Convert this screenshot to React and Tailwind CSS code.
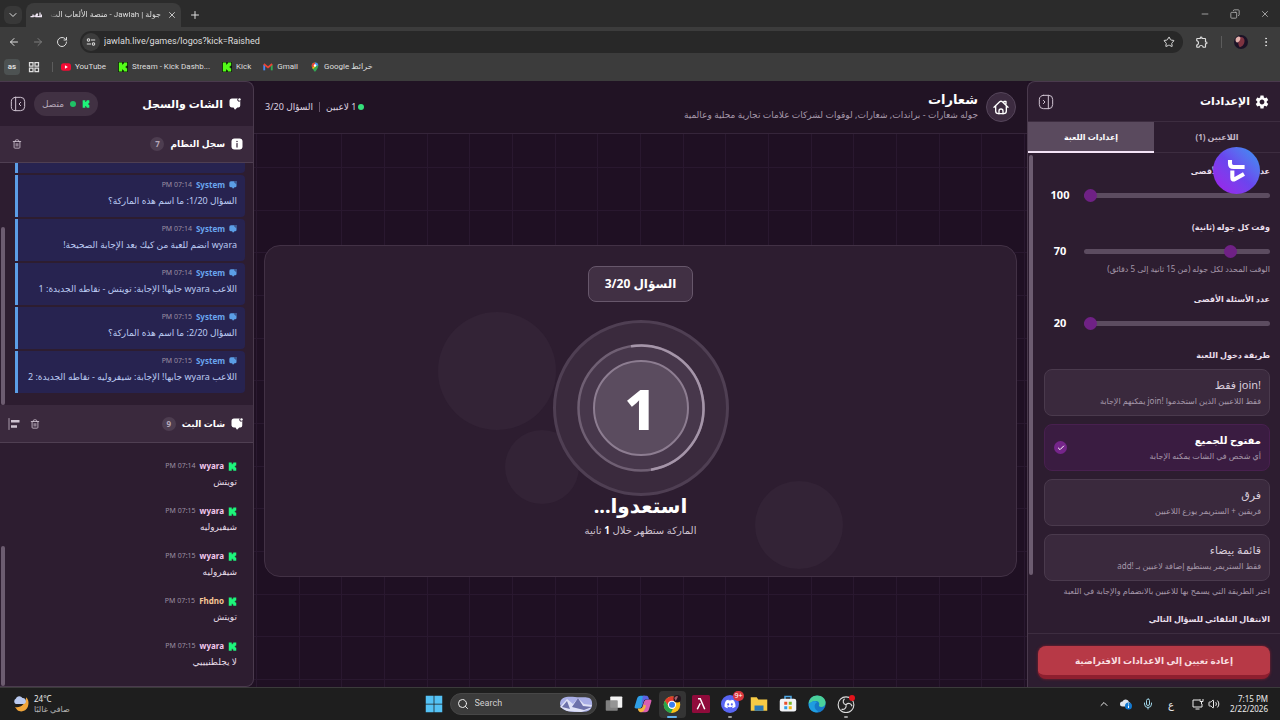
import React, { useState } from 'react';
import {
  ArrowLeft, ArrowRight, Check, ChevronDown, ChevronUp, Copy, EllipsisVertical,
  Mic, Minus, Plus, RotateCw, Search, Star, Trash2, Volume2, X,
} from 'lucide-react';
import { FaDiscord } from 'react-icons/fa';
import { MdOutlineExtension, MdSettings } from 'react-icons/md';

const systemMessages = [
  { time: '07:14 PM', text: 'السؤال 1/20: ما اسم هذه الماركة؟' },
  { time: '07:14 PM', text: 'wyara انضم للعبة من كيك بعد الإجابة الصحيحة!' },
  { time: '07:14 PM', text: 'اللاعب wyara جابها! الإجابة: تويتش - نقاطه الجديدة: 1' },
  { time: '07:15 PM', text: 'السؤال 2/20: ما اسم هذه الماركة؟' },
  { time: '07:15 PM', text: 'اللاعب wyara جابها! الإجابة: شيفروليه - نقاطه الجديدة: 2' },
];

const chatMessages = [
  { user: 'wyara', color: 'text-[#f3c9ee]', time: '07:14 PM', text: 'تويتش' },
  { user: 'wyara', color: 'text-[#f3c9ee]', time: '07:15 PM', text: 'شيفيروليه' },
  { user: 'wyara', color: 'text-[#f3c9ee]', time: '07:15 PM', text: 'شيفروليه' },
  { user: 'Fhdno', color: 'text-[#f5c795]', time: '07:15 PM', text: 'تويتش' },
  { user: 'wyara', color: 'text-[#f3c9ee]', time: '07:15 PM', text: 'لا يجلطنيييي' },
];

const joinModes = [
  { id: 'join', title: '!join فقط', hint: 'فقط اللاعبين الذين استخدموا !join يمكنهم الإجابة' },
  { id: 'open', title: 'مفتوح للجميع', hint: 'أي شخص في الشات يمكنه الإجابة' },
  { id: 'teams', title: 'فرق', hint: 'فريقين + الستريمر يوزع اللاعبين' },
  { id: 'whitelist', title: 'قائمة بيضاء', hint: 'فقط الستريمر يستطيع إضافة لاعبين بـ !add' },
];

/* ---------- icons ---------- */

const KickIcon = ({ className, boxed }) => (
  <svg viewBox="0 0 24 24" className={className} aria-hidden="true">
    {boxed && <rect width="24" height="24" fill="#0c1a0a" />}
    <path
      d="M2 1h8v5h2V4h2V1h8v8h-2v2h-2v2h2v2h2v8h-8v-3h-2v-2h-2v5H2z"
      fill={boxed ? '#53fc18' : '#1df57a'}
    />
  </svg>
);

const ChatIcon = ({ className }) => (
  <svg viewBox="0 0 24 24" className={className} fill="currentColor" aria-hidden="true">
    <path d="M6 1h11.500a3.500 3.500 0 0 0 5 5V15a4 4 0 0 1-4 4h-2L12 23.500 9 19H6a5 5 0 0 1-5-4V6a5 5 0 0 1 5-5z" />
    <circle cx="21" cy="3" r="2.400" />
  </svg>
);

const InfoIcon = ({ className }) => (
  <svg viewBox="0 0 24 24" className={className} aria-hidden="true">
    <rect x="1" y="1" width="22" height="22" rx="6" fill="currentColor" />
    <circle cx="12" cy="7" r="1.500" fill="#3a293d" />
    <path d="M12 11v7" stroke="#3a293d" strokeWidth="2.500" strokeLinecap="round" />
  </svg>
);

const PanelIcon = ({ className, flip }) => (
  <svg viewBox="0 0 24 24" className={className} fill="none" stroke="currentColor" strokeWidth="1.500" strokeLinecap="round" strokeLinejoin="round" aria-hidden="true">
    <rect x="2" y="2" width="20" height="20" rx="6" />
    <path d={flip ? 'M15.500 2v20M8 9.500l2.500 2.500L8 14.500' : 'M8.500 2v20M16 9.500 13.500 12l2.500 2.500'} />
  </svg>
);

const HomeIcon = ({ className }) => (
  <svg viewBox="0 0 24 24" className={className} fill="none" stroke="currentColor" strokeWidth="2" strokeLinecap="round" strokeLinejoin="round" aria-hidden="true">
    <path d="M1.500 12.500 10 4.200a3 3 0 0 1 4 0l8.500 8.300M4 10.500V18a4 4 0 0 0 4 4h8a4 4 0 0 0 4-4v-7.500M16.500 5V3.500h3V8" />
    <path d="M9 22v-4a3 3 0 0 1 6 0v4" />
  </svg>
);

const AlignIcon = ({ className }) => (
  <svg viewBox="0 0 24 24" className={className} fill="none" stroke="currentColor" aria-hidden="true">
    <path d="M2 1v22" strokeWidth="1.500" strokeLinecap="round" />
    <path d="M6 6.500h17M6 17h12" strokeWidth="5" />
  </svg>
);

const TuneIcon = ({ className }) => (
  <svg viewBox="0 0 24 24" className={className} fill="none" stroke="currentColor" strokeWidth="2.500" aria-hidden="true">
    <circle cx="6" cy="7" r="3" />
    <path d="M12 7h10M2 17h10" />
    <circle cx="18" cy="17" r="3" />
  </svg>
);

const AppsIcon = ({ className }) => (
  <svg viewBox="0 0 24 24" className={className} fill="none" stroke="currentColor" strokeWidth="2.500" aria-hidden="true">
    <path d="M3 3h7v7H3zM14 3h7v7h-7zM3 14h7v7H3zM14 14h7v7h-7z" />
  </svg>
);

const YouTubeIcon = ({ className }) => (
  <svg viewBox="0 0 24 24" className={className} aria-hidden="true">
    <rect x="0" y="3" width="24" height="18" rx="6" fill="#f40a33" />
    <path d="M9.500 8v8l7-4z" fill="#fff" />
  </svg>
);

const GmailIcon = ({ className }) => (
  <svg viewBox="0 0 24 24" className={className} fill="none" strokeWidth="4.500" aria-hidden="true">
    <path d="M3 20V7" stroke="#4a8af4" />
    <path d="M21 20V7" stroke="#34a853" />
    <path d="m2 5 10 8 10-8" stroke="#ea4335" />
  </svg>
);

const MapsIcon = ({ className }) => (
  <svg viewBox="0 0 24 24" className={className} aria-hidden="true">
    <path d="M12 24S4 15 4 8.500A8 8 0 0 1 12 1a8 8 0 0 1 8 7.500C20 15 12 24 12 24z" fill="#34a853" />
    <path d="M4 8.500A8 8 0 0 1 12 1v8l-6.500 5A12 12 0 0 1 4 8.500z" fill="#ea4335" />
    <path d="M12 1a8 8 0 0 1 8 7.500L12 9z" fill="#4a8af4" />
    <path d="M5.500 14 12 8l2 2-7 7.500z" fill="#fbbc04" />
    <circle cx="12" cy="8.500" r="3" fill="#fff" />
  </svg>
);

const Avatar = ({ className }) => (
  <svg viewBox="0 0 24 24" className={className} aria-hidden="true">
    <circle cx="12" cy="12" r="12" fill="#1b1226" />
    <path d="M9 4c5-2 9 1 9 6 0 5-3 10-8 11-3-3-4-10-1-17z" fill="#7d3340" />
    <path d="M3 6c4-5 7-4 8-1 0 4-2 6-5 8-3 0-4-4-3-7z" fill="#e5b3ae" />
  </svg>
);

/* ---------- browser chrome ---------- */

const BrowserBar = () => (
  <header className="shrink-0 bg-[#3c3c3c] font-['Roboto','DejaVu_Sans',sans-serif] text-[#dedede]">
    <div className="flex h-[27px] items-end justify-between bg-[#2b2b2b] pl-1">
      <div className="flex h-6 items-center">
        <button aria-label="Search tabs" className="grid h-[18px] w-[18px] place-items-center rounded-md bg-[#383838]">
          <ChevronDown className="h-3 w-3" />
        </button>
        <div className="ml-1 flex h-6 w-[155px] items-center gap-1.5 rounded-t-lg bg-[#3c3c3c] px-1">
          <svg viewBox="0 0 24 12" className="h-2 w-3 shrink-0" fill="none" stroke="#f0e6f4" strokeWidth="2.500" aria-hidden="true">
            <path d="M1 9h5V5M6 8h6q3 0 3-3t-3 1v3h8V1M20 9h3V5" />
          </svg>
          <div dir="rtl" className="min-w-0 flex-1 overflow-hidden text-[8px] whitespace-nowrap [mask-image:linear-gradient(to_right,transparent,black_12px)]">
            جولة | Jawlah - منصة الألعاب الت
          </div>
          <button aria-label="Close tab"><X className="h-2.5 w-2.5" /></button>
        </div>
        <button aria-label="New tab" className="ml-2"><Plus className="h-3 w-3" /></button>
      </div>
      <div className="flex h-[27px] items-center gap-5 pr-2.5 text-[#b5b5b5]">
        <button aria-label="Minimize"><Minus className="h-2.5 w-2.5" /></button>
        <button aria-label="Restore"><Copy className="h-2.5 w-2.5 -scale-x-100" /></button>
        <button aria-label="Close"><X className="h-2.5 w-2.5" /></button>
      </div>
    </div>

    <div className="flex h-[30px] items-center gap-3 pl-2 pr-2">
      <button aria-label="Back"><ArrowLeft className="h-3 w-3" /></button>
      <button aria-label="Forward" className="text-[#7d7d7d]"><ArrowRight className="h-3 w-3" /></button>
      <button aria-label="Reload"><RotateCw className="h-3 w-3" /></button>
      <div className="flex h-[22px] flex-1 items-center gap-1 rounded-full bg-[#282828] pl-0.5 pr-2">
        <span className="grid h-[18px] w-[18px] place-items-center rounded-full bg-[#3c3c3c]"><TuneIcon className="h-2.5 w-2.5" /></span>
        <input aria-label="Address" defaultValue="jawlah.live/games/logos?kick=Raished" className="min-w-0 flex-1 bg-transparent text-[9px] outline-none" />
        <button aria-label="Bookmark"><Star className="h-3 w-3" /></button>
      </div>
      <button aria-label="Extensions"><MdOutlineExtension className="h-3.5 w-3.5" /></button>
      <span className="h-3 w-px bg-[#5c5c5c]" />
      <button aria-label="Profile"><Avatar className="h-3.5 w-3.5" /></button>
      <button aria-label="Menu"><EllipsisVertical className="h-3 w-3" /></button>
    </div>

    <nav className="flex h-6 items-center gap-3 px-1 pb-1 text-[8px]">
      <a href="#as" className="grid h-4 w-4 place-items-center rounded bg-[#4d5252] font-bold">as</a>
      <a href="#apps" aria-label="Apps" className="-ml-1"><AppsIcon className="h-3 w-3" /></a>
      <span className="h-2.5 w-px bg-[#5c5c5c]" />
      <a href="#youtube" className="-ml-1 flex items-center gap-1"><YouTubeIcon className="h-2.5 w-2.5" />YouTube</a>
      <a href="#dash" className="flex items-center gap-1"><KickIcon boxed className="h-2.5 w-2.5" />Stream - Kick Dashb...</a>
      <a href="#kick" className="flex items-center gap-1"><KickIcon boxed className="h-2.5 w-2.5" />Kick</a>
      <a href="#gmail" className="flex items-center gap-1"><GmailIcon className="h-2.5 w-2.5" />Gmail</a>
      <a href="#maps" className="flex items-center gap-1"><MapsIcon className="h-2.5 w-2.5" /><span dir="rtl">خرائط Google</span></a>
    </nav>
  </header>
);

/* ---------- chat panel ---------- */

const Count = ({ children }) => (
  <span className="grid h-[14px] w-[14px] place-items-center rounded-full bg-[#4d3d50] text-[8px] text-[#b5a8b8]">{children}</span>
);

const Message = ({ icon, name, nameClass, time, text, textClass }) => (
  <>
    <div className="flex items-center gap-1 text-[8px] leading-3">
      {icon}
      <span className={nameClass}>{name}</span>
      <span className="text-[7px] text-[#9c8fa2]">{time}</span>
    </div>
    <p className={textClass}>{text}</p>
  </>
);

const ChatPanel = () => (
  <aside className="flex w-[254px] shrink-0 flex-col overflow-hidden rounded-br-lg rounded-tr-lg border-b border-r border-t border-[#4a3a4d] bg-[#2d1d30]">
    <div className="flex h-[44px] shrink-0 items-center justify-between pl-2.5 pr-3">
      <h2 className="flex items-center gap-1.5 text-[11px] font-bold text-white">
        <ChatIcon className="h-3 w-3" />
        الشات والسجل
      </h2>
      <div className="flex items-center gap-2">
        <span className="flex h-6 items-center gap-1.5 rounded-full bg-[#413143] px-2 text-[9px] text-[#b5a8b8]">
          <KickIcon className="h-2 w-2" />
          <span className="h-1.5 w-1.5 rounded-full bg-[#1fc266]" />
          متصل
        </span>
        <button aria-label="إخفاء الشات" className="text-[#cfc3d1]"><PanelIcon className="h-4 w-4" /></button>
      </div>
    </div>

    <div className="flex h-[37px] shrink-0 items-center justify-between border-b border-[#4f3f52] bg-[#3a293d] pl-3 pr-2.5">
      <h3 className="flex items-center gap-1.5 text-[9px] font-bold text-white">
        <InfoIcon className="h-3 w-3" />
        سجل النظام
        <Count>7</Count>
      </h3>
      <button aria-label="مسح السجل" className="text-[#cfc3d1]"><Trash2 className="h-2.5 w-2.5" /></button>
    </div>
    <div className="flex h-[242px] shrink-0">
      <ul className="flex min-w-0 flex-1 flex-col justify-end gap-0.5 overflow-hidden pb-3 pr-2">
        <li aria-hidden="true" className="flex-1 rounded-br border-l-[3px] border-[#5b9ee6] bg-[#272350]" />
        {systemMessages.map((m, i) => (
          <li key={i} className="h-[42px] shrink-0 rounded-r border-l-[3px] border-[#5b9ee6] bg-[#272350] pr-2 pt-1">
            <Message
              icon={<ChatIcon className="h-2 w-2 text-[#5b9ee6]" />}
              name="System"
              nameClass="font-bold text-[#6aa5ee]"
              time={m.time}
              text={m.text}
              textClass="text-[9px] leading-5 whitespace-nowrap text-[#bccbf3]"
            />
          </li>
        ))}
      </ul>
      <div className="flex w-[15px] flex-col justify-end">
        <span className="mr-auto ml-px h-[178px] w-1 rounded-full bg-[#6c5c70]" />
      </div>
    </div>

    <div className="flex h-[38px] shrink-0 items-center justify-between border-b border-[#4f3f52] bg-[#3a293d] pl-2 pr-2.5">
      <h3 className="flex items-center gap-1.5 text-[9px] font-bold text-white">
        <ChatIcon className="h-3 w-3" />
        شات البث
        <Count>9</Count>
      </h3>
      <div className="flex items-center gap-2.5 text-[#cfc3d1]">
        <button aria-label="مسح الشات"><Trash2 className="h-2.5 w-2.5" /></button>
        <button aria-label="محاذاة"><AlignIcon className="h-3 w-3" /></button>
      </div>
    </div>
    <div className="flex min-h-0 flex-1">
      <ul className="flex min-w-0 flex-1 flex-col justify-end gap-[3px] overflow-hidden pb-2 pr-4">
        {chatMessages.map((m, i) => (
          <li key={i} className="h-[42px] shrink-0 pt-1">
            <Message
              icon={<KickIcon className="h-[9px] w-[9px]" />}
              name={m.user}
              nameClass={`font-bold ${m.color}`}
              time={m.time}
              text={m.text}
              textClass="text-[9px] leading-5 whitespace-nowrap text-[#e6dce8]"
            />
          </li>
        ))}
      </ul>
      <div className="flex w-[15px] flex-col justify-end">
        <span className="mr-auto ml-px h-[140px] w-1 rounded-full bg-[#6c5c70]" />
      </div>
    </div>
  </aside>
);

/* ---------- game area ---------- */

const GridBackdrop = () => (
  <svg className="absolute inset-0 h-full w-full" aria-hidden="true">
    <defs>
      <pattern id="grid" width="128" height="128" patternUnits="userSpaceOnUse" x="2" y="33">
        <path d="M.5 0v128M43.500 0v128M85.500 0v128M0 .5h128M0 43.500h128M0 85.500h128" stroke="#29182f" fill="none" />
      </pattern>
    </defs>
    <rect width="100%" height="100%" fill="url(#grid)" />
  </svg>
);

const Countdown = ({ value }) => (
  <div className="grid h-[176px] w-[176px] place-items-center">
    <svg viewBox="0 0 176 176" className="col-start-1 row-start-1 h-full w-full" fill="none" aria-hidden="true">
      <circle cx="88" cy="88" r="86.500" fill="#3a2a3d" stroke="#4f3f53" strokeWidth="3" />
      <circle cx="88" cy="88" r="62.500" fill="#47374b" stroke="#6f5f73" strokeWidth="2.500" />
      <path d="M78 26.300A62.500 62.500 0 0 1 98 149.700" stroke="#a595a9" strokeWidth="2.500" />
      <circle cx="88" cy="88" r="47" fill="#5b4c5f" stroke="#8d7d91" strokeWidth="2" />
    </svg>
    <span className="col-start-1 row-start-1 text-[56px] leading-none font-extrabold text-white">{value}</span>
  </div>
);

const GameArea = () => (
  <main className="flex min-w-0 flex-1 flex-col bg-[#1f1023]">
    <div className="flex h-[53px] shrink-0 items-center justify-between border-b border-[#35253a] bg-[#211324] px-[11px]">
      <div className="flex items-center gap-2">
        <a href="#home" aria-label="الرئيسية" className="grid h-[30px] w-[30px] place-items-center rounded-full border border-[#55455a] bg-[#3c2b40] text-white">
          <HomeIcon className="h-4 w-4" />
        </a>
        <div>
          <h1 className="text-[13px] leading-4 font-bold text-white">شعارات</h1>
          <p className="text-[9px] leading-4 text-[#a698aa]">جوله شعارات - براندات, شعارات, لوقوات لشركات علامات تجارية محلية وعالمية</p>
        </div>
      </div>
      <div className="flex items-center gap-1.5 text-[9px] text-[#ded3e0]">
        <span className="flex items-center gap-0.5">
          <span className="h-1.5 w-1.5 rounded-full bg-[#35e07c]" />
          1 لاعبين
        </span>
        <span className="h-2.5 w-px bg-[#66566a]" />
        <span>السؤال 3/20</span>
      </div>
    </div>

    <div className="relative flex min-h-0 flex-1 flex-col justify-center px-2.5">
      <GridBackdrop />
      <section className="relative flex flex-col items-center overflow-hidden rounded-2xl border border-[#423145] bg-[#2d1d30] pb-9 pt-5">
        <span className="absolute left-[23%] top-[20%] h-[118px] w-[118px] rounded-full bg-[#332336]" />
        <span className="absolute left-[32%] top-[56%] h-[74px] w-[74px] rounded-full bg-[#332336]" />
        <span className="absolute bottom-[2%] right-[23%] h-[88px] w-[88px] rounded-full bg-[#332336]" />
        <div className="relative flex flex-col items-center">
          <p className="mb-[18px] flex h-9 items-center rounded-lg border border-[#67576b] bg-[#413044] px-4 text-[12px] font-bold text-white">السؤال 3/20</p>
          <Countdown value={1} />
          <h2 className="text-[20px] leading-5 font-bold text-white">استعدوا...</h2>
          <p className="mt-1 text-[10px] leading-5 text-[#cfc3d1]">الماركة ستظهر خلال <b className="text-white">1</b> ثانية</p>
        </div>
      </section>
    </div>
  </main>
);

/* ---------- settings panel ---------- */

const RangeField = ({ id, label, min, max, value, onChange, help }) => (
  <div>
    <label htmlFor={id} className="block text-[8px] leading-4 font-bold text-[#e9dfeb]">{label}</label>
    <div className="mt-1.5 flex h-5 items-center">
      <input
        id={id}
        type="range"
        min={min}
        max={max}
        value={value}
        onChange={(e) => onChange(Number(e.target.value))}
        className="h-[5px] min-w-0 flex-1 appearance-none rounded-full bg-[#5c4c60] [&::-webkit-slider-thumb]:h-[13px] [&::-webkit-slider-thumb]:w-[13px] [&::-webkit-slider-thumb]:appearance-none [&::-webkit-slider-thumb]:rounded-full [&::-webkit-slider-thumb]:bg-[#6f2185]"
      />
      <output htmlFor={id} className="mr-2 w-8 text-center text-[11px] font-bold text-white">{value}</output>
    </div>
    {help && <p className="text-[8px] leading-4 text-[#a698aa]">{help}</p>}
  </div>
);

const SettingsPanel = () => {
  const [players, setPlayers] = useState(100);
  const [roundTime, setRoundTime] = useState(70);
  const [questions, setQuestions] = useState(20);
  const [mode, setMode] = useState('open');

  return (
    <aside className="relative flex w-[253px] shrink-0 flex-col rounded-tl-lg border-l border-t border-[#4a3a4d] bg-[#2d1d30]">
      <div className="flex h-[39px] shrink-0 items-center justify-between pl-2.5 pr-2.5">
        <h2 className="flex items-center gap-1 text-[11px] font-bold text-white">
          <MdSettings className="h-4 w-4" />
          الإعدادات
        </h2>
        <button aria-label="إخفاء الإعدادات" className="text-[#cfc3d1]"><PanelIcon flip className="h-4 w-4" /></button>
      </div>

      <div role="tablist" className="flex h-8 shrink-0 border-t border-[#3d2d40] text-[8px] font-bold">
        <button role="tab" aria-selected="false" className="flex-1 border-b border-[#3d2d40] text-[#c3b7c5]">اللاعبين (1)</button>
        <button role="tab" aria-selected="true" className="flex-1 border-b-2 border-[#f4e4f7] bg-[#5a4a5e] text-white">إعدادات اللعبة</button>
      </div>

      <div className="flex min-h-0 flex-1">
        <div className="min-w-0 flex-1 overflow-hidden pr-2.5 pt-2.5">
          <div className="flex flex-col gap-3.5">
            <RangeField id="players" label="عدد اللاعبين الأقصى" min={2} max={100} value={players} onChange={setPlayers} />
            <RangeField id="time" label="وقت كل جوله (ثانية)" min={15} max={300} value={roundTime} onChange={setRoundTime} help="الوقت المحدد لكل جوله (من 15 ثانية إلى 5 دقائق)" />
            <RangeField id="questions" label="عدد الأسئلة الأقصى" min={5} max={20} value={questions} onChange={setQuestions} />
          </div>

          <fieldset className="mt-3.5">
            <legend className="text-[8px] leading-4 font-bold text-[#e9dfeb]">طريقة دخول اللعبة</legend>
            <div className="mt-1.5 flex flex-col gap-2">
              {joinModes.map((m) => {
                const active = mode === m.id;
                return (
                  <label
                    key={m.id}
                    className={`flex h-[47px] items-center justify-between rounded-lg border px-2 ${active ? 'border-[#48204f] bg-[#3a1c41] text-white' : 'border-[#4a3a4d] bg-[#3a293d] text-[#d8ccda]'}`}
                  >
                    <input type="radio" name="mode" checked={active} onChange={() => setMode(m.id)} className="sr-only" />
                    <span>
                      <span className={`block leading-4 ${active ? 'text-[10px] font-bold' : 'text-[11px]'}`}>{m.title}</span>
                      <span className="block text-[8px] leading-4 text-[#a698aa]">{m.hint}</span>
                    </span>
                    {active && (
                      <span className="ml-px grid h-[13px] w-[13px] place-items-center rounded-full bg-[#75258a] text-white">
                        <Check className="h-2 w-2" strokeWidth={3} />
                      </span>
                    )}
                  </label>
                );
              })}
            </div>
          </fieldset>
          <p className="mt-0.5 text-[8px] leading-4 whitespace-nowrap text-[#a698aa]">اختر الطريقة التي يسمح بها للاعبين بالانضمام والإجابة في اللعبة</p>
          <h3 className="mt-3 text-[8px] leading-4 font-bold text-[#e9dfeb]">الانتقال التلقائي للسؤال التالي</h3>
        </div>
        <div className="w-4 pt-0.5">
          <span className="mr-auto ml-px block h-[88%] w-1 rounded-full bg-[#6c5c70]" />
        </div>
      </div>

      <div className="shrink-0 border-t border-[#3d2d40] px-2.5 pb-2 pt-3">
        <button className="h-[33px] w-full rounded-lg border-b-4 border-[#8e1f2f] bg-[#b73946] text-[9px] font-bold text-[#f9dfe0] shadow-[0_0_3px_#8e1f2f]">
          إعادة تعيين إلى الاعدادات الافتراضية
        </button>
      </div>

      {/* floating extension bubble */}
      <button aria-label="Jawlah" className="absolute right-5 top-[65px] grid h-[47px] w-[47px] place-items-center rounded-full bg-linear-to-tr from-[#a312e8] via-[#6a45ee] to-[#1f96f2]">
        <svg viewBox="0 0 24 24" className="h-7 w-7" fill="none" stroke="#fff" strokeWidth="3.500" aria-hidden="true">
          <path d="M6 2.500v3q0 3 3 3h9.500" />
          <path d="M8 11.500v6q0 2.500 2 1.500l8-4.500" />
        </svg>
      </button>
    </aside>
  );
};

/* ---------- windows taskbar ---------- */

const TaskIcon = ({ label, children, open, active }) => (
  <button aria-label={label} className={`relative grid h-[27px] w-[27px] place-items-center rounded ${active ? 'bg-[#343434]' : ''}`}>
    <svg viewBox="0 0 24 24" className="h-[18px] w-[18px]" aria-hidden="true">{children}</svg>
    {open && <span className={`absolute bottom-0 h-0.5 rounded-full ${active ? 'w-2.5 bg-[#62b2ee]' : 'w-1 bg-[#9a9a9a]'}`} />}
  </button>
);

const Taskbar = () => (
  <footer className="grid h-[33px] shrink-0 grid-cols-[1fr_auto_1fr] items-center border-t border-[#3b3b3b] bg-[#1e1e1e] px-3 text-[8px] text-[#ececec]">
    <div className="flex items-center gap-1">
      <svg viewBox="0 0 24 24" className="h-[18px] w-[18px]" aria-hidden="true">
        <path d="M19 3c3 3 4 8 2 13s-9 8-14 4l-3-4c7 2 14-4 15-13z" fill="#f0a53a" />
        <path d="M5 12a4 4 0 0 1 0-7 5 5 0 0 1 9-1 4 4 0 0 1 1 8z" fill="#b9c9ef" />
      </svg>
      <div className="leading-[10px]">
        <p>24°C</p>
        <p dir="rtl" className="text-[#b5b5b5]">صافي غالبًا</p>
      </div>
    </div>

    <div className="flex items-center gap-0.5">
      <TaskIcon label="Start">
        <path d="M1 1h10.500v10.500H1zM12.500 1H23v10.500H12.500zM1 12.500h10.500V23H1zM12.500 12.500H23V23H12.500z" fill="#54c2f5" />
      </TaskIcon>
      <label className="mr-0.5 flex h-[22px] w-[147px] items-center gap-1.5 rounded-full border border-[#474747] bg-[#3b3b3b] pl-1.5 pr-0.5">
        <Search className="h-3 w-3 shrink-0" />
        <input placeholder="Search" aria-label="Search" className="min-w-0 flex-1 bg-transparent font-['Roboto',sans-serif] text-[9px] outline-none placeholder:text-[#cfcfcf]" />
        <svg viewBox="0 0 36 18" className="h-[18px] w-9 shrink-0" aria-hidden="true">
          <path d="M2 9C2 2 9 1 17 2s16-2 17 5-3 10-10 10S3 18 2 9z" fill="#a9aee6" />
          <path d="m2 12 7-8 6 5 5-6 6 6 8 1-2 4-9 3-14-1z" fill="#dfe1f6" />
          <path d="m14 12 6-9 5 8 9 1-8 3zM4 12l5-6 3 8z" fill="#6d71aa" />
        </svg>
      </label>
      <TaskIcon label="Task view">
        <rect x="7" y="2" width="16" height="15" rx="1" fill="#f2f2f2" />
        <rect x="1" y="7" width="16" height="14" rx="1" fill="#8b8b8b" opacity=".9" />
      </TaskIcon>
      <TaskIcon label="Copilot">
        <path d="M1 15 4 5q1-4 5-4h6l-4 13q-1 4-5 4H3q-3 0-2-3z" fill="#2f9fe6" />
        <path d="m23 9-3 10q-1 4-5 4H9l4-13q1-4 5-4h3q3 0 2 3z" fill="#d95fb0" />
        <path d="M12 1h5q2 0 3 5h-4q-3 0-4 4l-2 4q1-9 2-13z" fill="#5c62e4" />
        <path d="M9 23q-3 0-4-5h3q4 0 5-5l3 1q-2 9-7 9z" fill="#f3b53e" />
      </TaskIcon>
      <TaskIcon label="Chrome" open active>
        <circle cx="12" cy="13" r="11" fill="#fbc116" />
        <path d="M2.500 7.500A11 11 0 0 1 21.500 7.500L12 9l-4.500 6z" fill="#e33b2e" />
        <path d="M2.500 7.500 8 16l5 3-2.500 5A11 11 0 0 1 2.500 7.500z" fill="#28a34b" />
        <circle cx="12" cy="13" r="5.500" fill="#fff" />
        <circle cx="12" cy="13" r="4" fill="#3c7ff0" />
        <circle cx="19" cy="5" r="5" fill="#24151f" />
        <path d="M15 4q3-4 5-2l-3 6z" fill="#a5606a" />
      </TaskIcon>
      <TaskIcon label="Player">
        <rect x="0" y="0" width="24" height="24" rx="2" fill="#8f0b3b" />
        <path d="M8 5h3l6 14M11 11 7 19" stroke="#fff" strokeWidth="2" fill="none" />
      </TaskIcon>
      <div className="relative">
        <TaskIcon label="Discord" open>
          <circle cx="12" cy="12" r="12" fill="#5865f2" />
          <g transform="translate(4 4)"><FaDiscord size={16} color="#fff" /></g>
        </TaskIcon>
        <span className="absolute right-0 top-0 rounded-full bg-[#d9363e] px-px text-[7px] leading-[10px] text-white">9+</span>
      </div>
      <TaskIcon label="Explorer">
        <path d="M1 3h8l2 3h12v15H1z" fill="#f7cb45" />
        <path d="M6 14h12v7H6z" fill="#2a79b8" />
      </TaskIcon>
      <TaskIcon label="Store">
        <path d="M8 6V2h8v4" stroke="#4fa9e6" strokeWidth="2" fill="none" />
        <rect x="1" y="5" width="22" height="17" rx="3" fill="#f2f4f7" />
        <path d="M7 9h4v4H7z" fill="#e8502c" />
        <path d="M13 9h4v4h-4z" fill="#7db928" />
        <path d="M7 15h4v4H7z" fill="#2f9fe6" />
        <path d="M13 15h4v4h-4z" fill="#f5b50f" />
      </TaskIcon>
      <TaskIcon label="Edge">
        <circle cx="12" cy="12" r="11.500" fill="#1679c9" />
        <path d="M1 12C1 5 6 .5 12.500.5 19 .5 23.500 5 23.500 10c0 4-3 6-6 6-2 0-3-1-3-2 1-1 1-6-4-6-5 0-8 3-9.500 4z" fill="#4ad19b" />
        <path d="M1 13c2-5 9-6 11-3-4 1-5 9 2 12-6 3-13-2-13-9z" fill="#1f9ee0" />
      </TaskIcon>
      <TaskIcon label="OBS" open>
        <circle cx="12" cy="13" r="10.500" fill="#232323" stroke="#dcdcdc" strokeWidth="1.500" />
        <path d="M12 13c-4-1-5-5-2-8M12 13c3-3 7-2 8 2M12 13c1 4-2 7-6 6" stroke="#dcdcdc" strokeWidth="1.500" fill="none" />
        <circle cx="20" cy="4" r="4" fill="#e3131b" />
      </TaskIcon>
    </div>

    <div className="flex items-center justify-end gap-2.5">
      <ChevronUp className="h-3 w-3" />
      <svg viewBox="0 0 24 24" className="h-3 w-3" aria-hidden="true">
        <path d="M5 17a5 5 0 0 1 0-10 7 7 0 0 1 13 1 5 5 0 0 1 1 9z" fill="#dfe6ee" />
        <circle cx="17" cy="16" r="7" fill="#1278cf" />
        <path d="M17 15v5M17 11v2" stroke="#fff" strokeWidth="2" />
      </svg>
      <Mic className="h-3 w-3 text-[#9fd4e6]" />
      <span className="mx-1 text-[10px]">ع</span>
      <span className="ml-1 flex items-center gap-1">
        <svg viewBox="0 0 24 24" className="h-3 w-3" fill="none" stroke="currentColor" strokeWidth="2" aria-hidden="true">
          <path d="M15 4H2v14h18v-6M7 22h8M19 12V7M16 2v5h6V2" />
        </svg>
        <Volume2 className="h-3 w-3" />
      </span>
      <div className="text-right leading-[10px]">
        <p>7:15 PM</p>
        <p>2/22/2026</p>
      </div>
    </div>
  </footer>
);

const App = () => (
  <div className="flex h-screen flex-col overflow-hidden bg-[#1f1023] font-['Noto_Sans','DejaVu_Sans',sans-serif]">
    <BrowserBar />
    <div dir="rtl" className="flex min-h-0 flex-1">
      <SettingsPanel />
      <GameArea />
      <ChatPanel />
    </div>
    <Taskbar />
  </div>
);

export default App;
